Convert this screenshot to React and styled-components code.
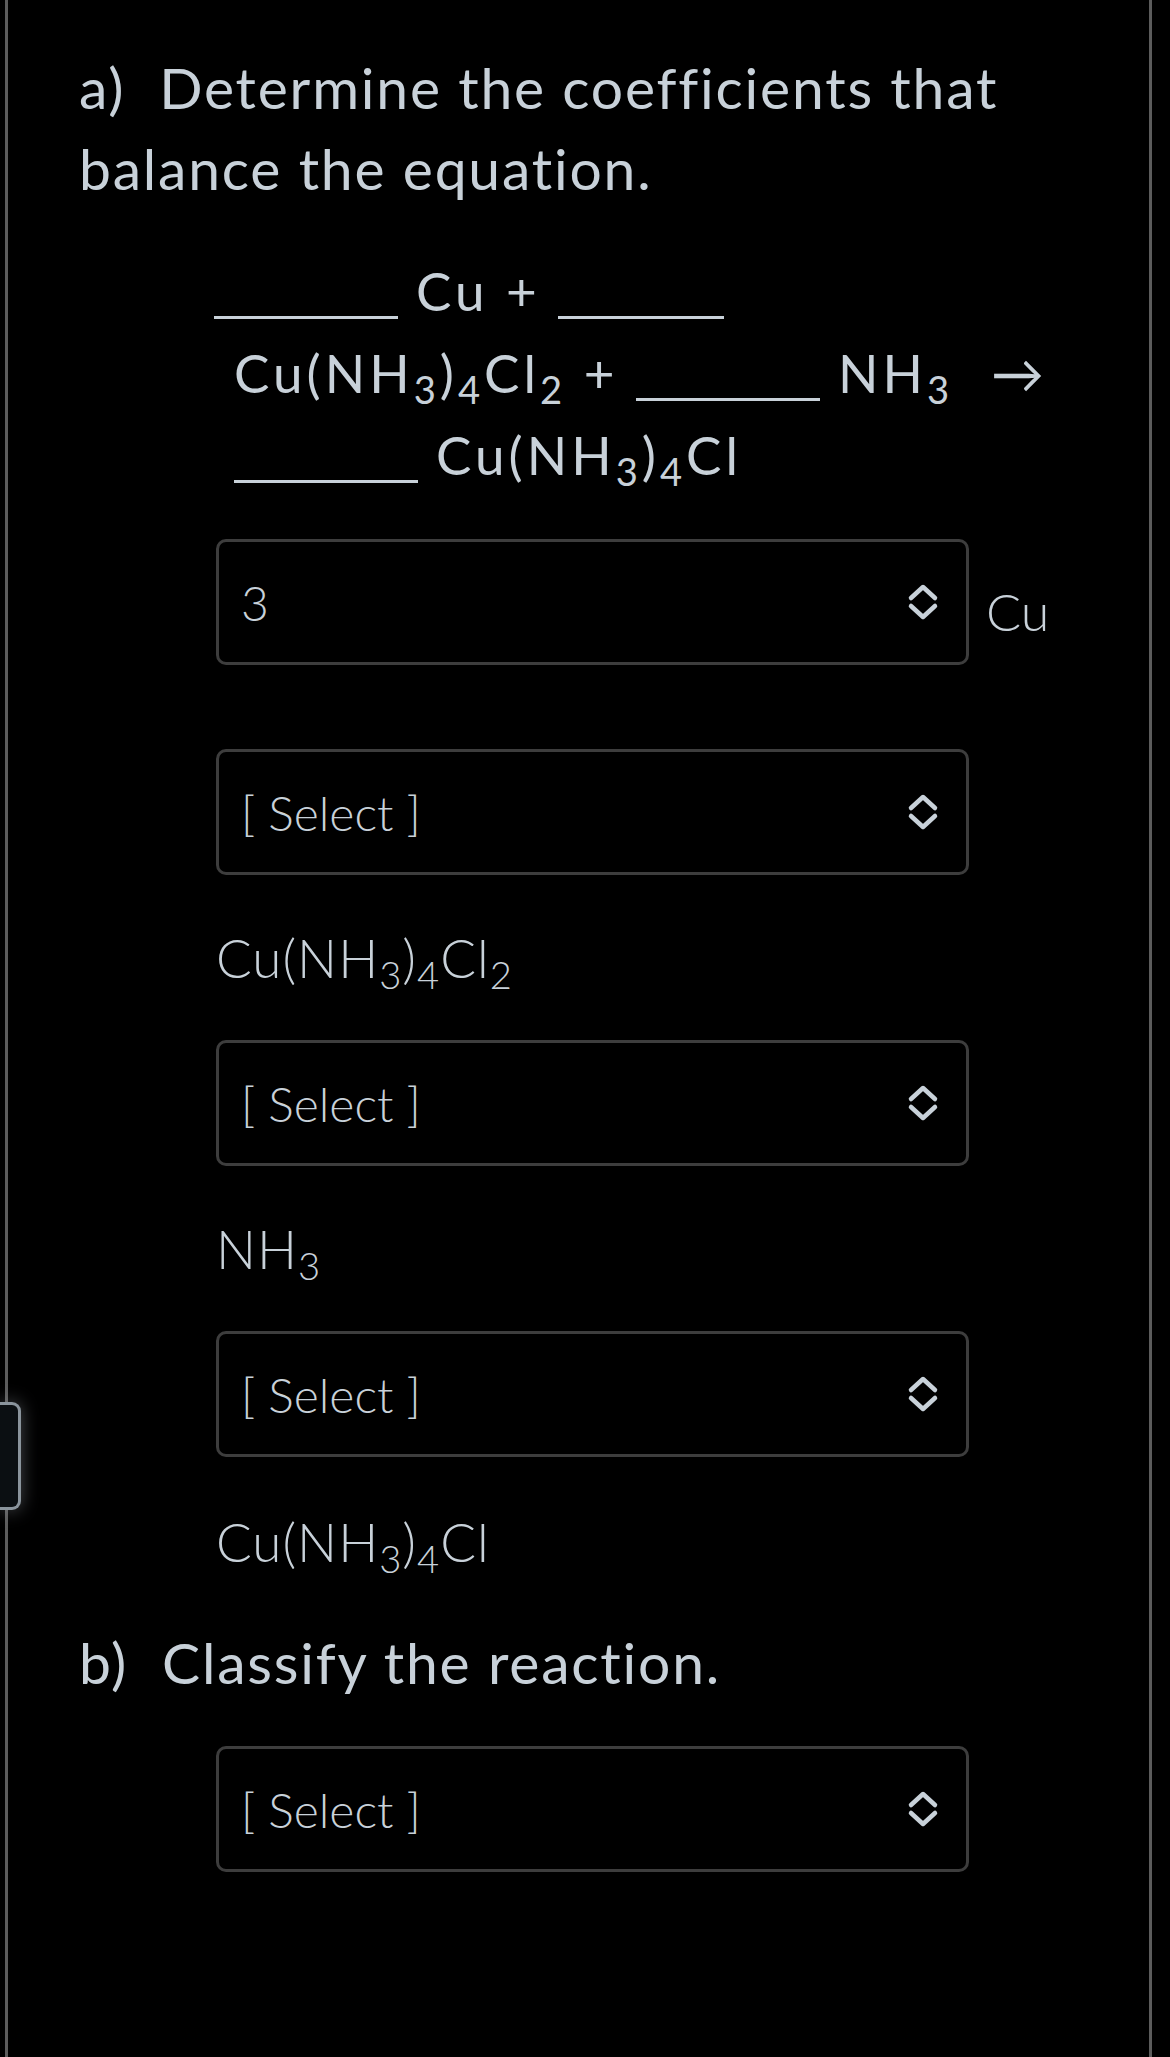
import React from "react";
import styled, { createGlobalStyle } from "styled-components";

const GlobalStyle = createGlobalStyle`
  html, body {
    margin: 0;
    padding: 0;
    background: #000000;
  }
  body {
    font-family: Lato, "Open Sans", sans-serif;
    color: #c8d1d9;
  }
`;

const Page = styled.div`
  position: relative;
  box-sizing: border-box;
  min-height: 2057px;
  margin: 0 18px 0 5px;
  border-left: 3px solid #5c5c5c;
  border-right: 3px solid #5c5c5c;
  padding: 47px 0 0 71px;
`;

const Heading = styled.h2`
  margin: 0;
  font-size: 57px;
  font-weight: 400;
  line-height: 81px;
  letter-spacing: 1.8px;
  padding-right: 80px;
`;

const Letter = styled.span`
  margin-right: 34px;
`;

const Equation = styled.div`
  margin: 41px 0 0 135px;
  font-size: 53px;
  line-height: 82px;
  letter-spacing: 4px;
`;

const EqLine = styled.div`
  padding-left: ${(props) => props.indent || 0}px;
  white-space: nowrap;
`;

const Blank = styled.span`
  display: inline-block;
  width: ${(props) => props.width || 184}px;
  margin: 0 18px -8px 0;
  border-bottom: 3px solid #c8d1d9;
`;

const Sub = styled.sub`
  font-size: 0.72em;
  line-height: 0;
  vertical-align: -0.3em;
`;

const Arrow = styled.span`
  margin-left: 38px;
`;

const Answers = styled.div`
  margin: 43px 0 0 137px;
`;

const SelectRow = styled.div`
  display: flex;
  align-items: center;
  gap: 17px;
  margin-bottom: ${(props) => props.spacing || 0}px;
`;

const SelectBox = styled.div`
  box-sizing: border-box;
  display: flex;
  align-items: center;
  justify-content: space-between;
  width: 753px;
  height: 126px;
  padding: 0 27px 0 22px;
  border: 3px solid #3d3d3d;
  border-radius: 10px;
  font-size: 48px;
  font-weight: 300;
  color: #c8d1d9;
`;

const SideText = styled.span`
  font-size: 52px;
  font-weight: 300;
  padding-top: 18px;
`;

const Label = styled.div`
  display: flex;
  align-items: center;
  height: ${(props) => props.height || 165}px;
  font-size: 53px;
  font-weight: 300;
  letter-spacing: 1px;
`;

const SubHeading = styled(Heading)`
  margin-top: -3px;
`;

const LastAnswers = styled(Answers)`
  margin-top: 43px;
`;

const SideTab = styled.div`
  position: absolute;
  left: -8px;
  top: 1402px;
  width: 21px;
  height: 108px;
  box-sizing: border-box;
  background: #0b0f12;
  border: 3px solid #8a949c;
  border-left: none;
  border-radius: 0 9px 9px 0;
  box-shadow: 0 0 18px rgba(200, 210, 220, 0.35);
`;

function Chevrons() {
  return (
    <svg width="32" height="38" viewBox="0 0 32 38" fill="none">
      <path
        d="M4 15 L16 4 L28 15 M4 23 L16 34 L28 23"
        stroke="#c8d1d9"
        strokeWidth="4.5"
        strokeLinecap="round"
        strokeLinejoin="round"
      />
    </svg>
  );
}

function Select({ value }) {
  return (
    <SelectBox>
      <span>{value}</span>
      <Chevrons />
    </SelectBox>
  );
}

export default function App() {
  return (
    <>
      <GlobalStyle />
      <Page>
        <SideTab />
        <Heading>
          <Letter>a)</Letter>Determine the coefficients that balance the
          equation.
        </Heading>

        <Equation>
          <EqLine>
            <Blank />
            Cu + <Blank width={166} />
          </EqLine>
          <EqLine indent={20}>
            Cu(NH<Sub>3</Sub>)<Sub>4</Sub>Cl<Sub>2</Sub> + <Blank />
            NH<Sub>3</Sub>
            <Arrow>→</Arrow>
          </EqLine>
          <EqLine indent={20}>
            <Blank />
            Cu(NH<Sub>3</Sub>)<Sub>4</Sub>Cl
          </EqLine>
        </Equation>

        <Answers>
          <SelectRow spacing={84}>
            <Select value="3" />
            <SideText>Cu</SideText>
          </SelectRow>
          <SelectRow>
            <Select value="[ Select ]" />
          </SelectRow>
          <Label>
            <span>
              Cu(NH<Sub>3</Sub>)<Sub>4</Sub>Cl<Sub>2</Sub>
            </span>
          </Label>
          <SelectRow>
            <Select value="[ Select ]" />
          </SelectRow>
          <Label>
            <span>
              NH<Sub>3</Sub>
            </span>
          </Label>
          <SelectRow>
            <Select value="[ Select ]" />
          </SelectRow>
          <Label height={168}>
            <span>
              Cu(NH<Sub>3</Sub>)<Sub>4</Sub>Cl
            </span>
          </Label>
        </Answers>

        <SubHeading>
          <Letter>b)</Letter>Classify the reaction.
        </SubHeading>

        <LastAnswers>
          <SelectRow>
            <Select value="[ Select ]" />
          </SelectRow>
        </LastAnswers>
      </Page>
    </>
  );
}
